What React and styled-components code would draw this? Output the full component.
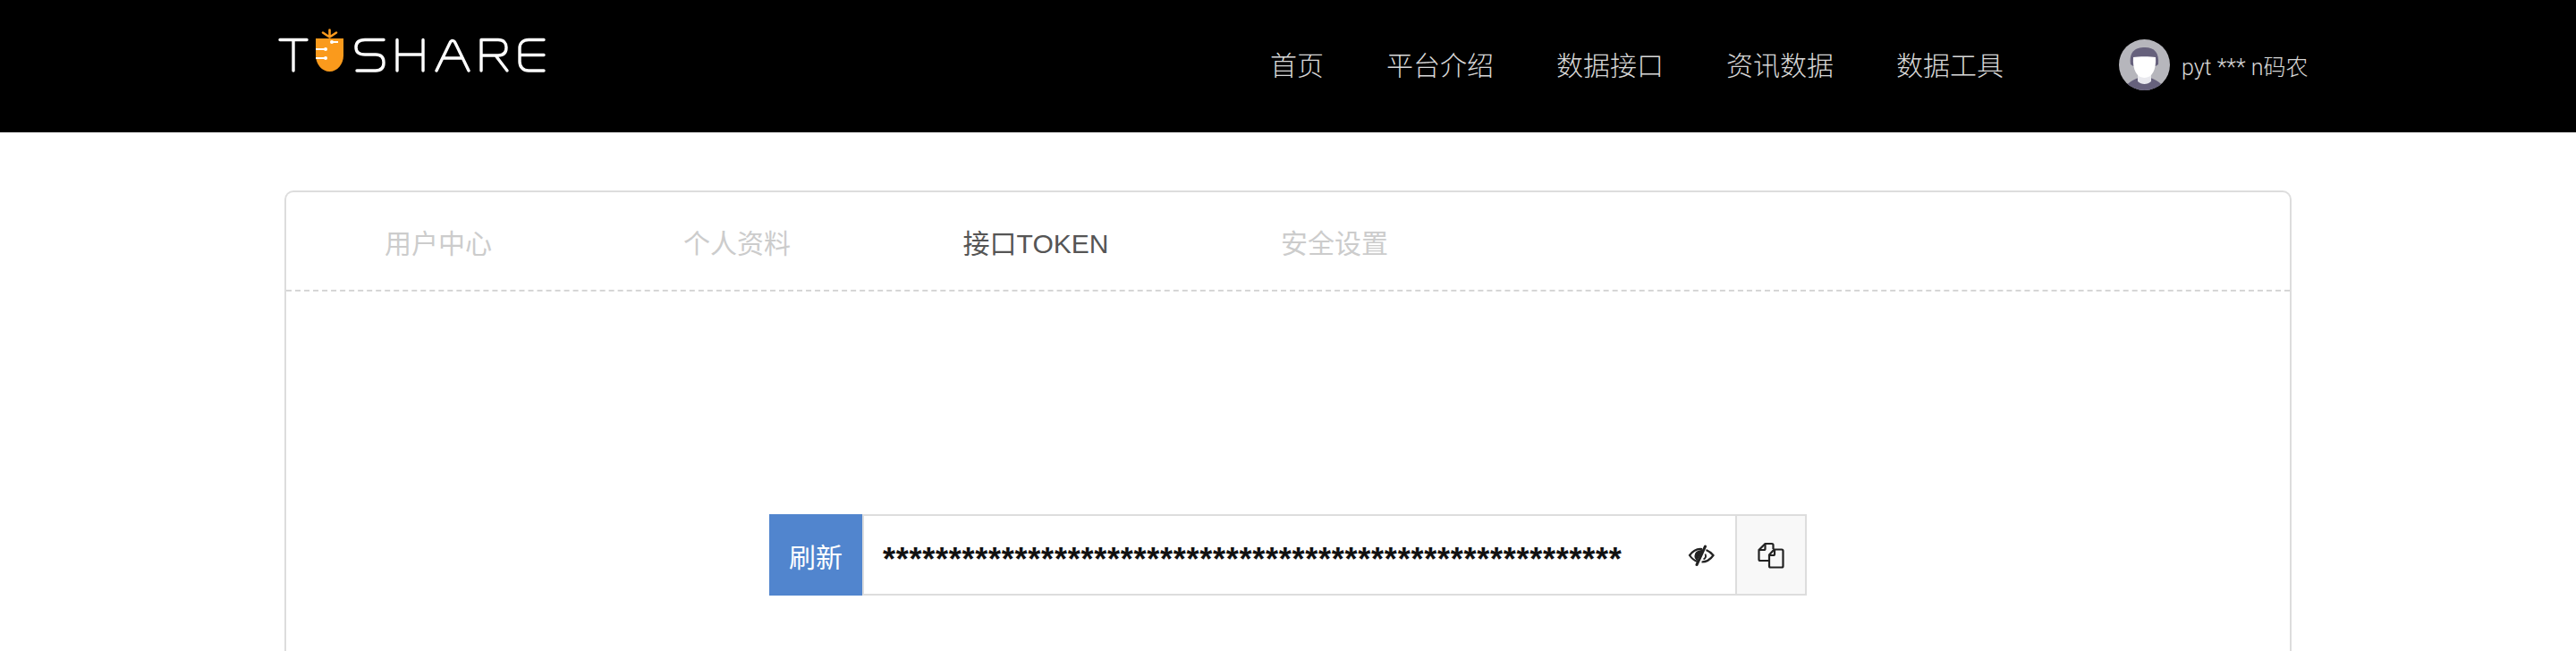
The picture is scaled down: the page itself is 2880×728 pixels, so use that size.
import React from 'react';
import styled, { createGlobalStyle } from 'styled-components';

const GlobalStyle = createGlobalStyle`
    html, body {
        margin: 0;
        padding: 0;
        background: #fff;
        overflow: hidden;
    }
    body {
        font-family: "Liberation Sans", "Noto Sans CJK SC", sans-serif;
    }
`;

const Header = styled.header`
    height: 148px;
    background: #000;
    display: flex;
    align-items: flex-start;
    padding: 0 299px 0 311px;
`;

const LogoWrap = styled.a`
    display: block;
    margin-top: 32px;
    width: 300px;
    height: 50px;
`;

const Nav = styled.nav`
    margin-left: auto;
    display: flex;
    gap: 70px;
    height: 141px;
    align-items: center;
`;

const NavItem = styled.a`
    font-family: "Noto Sans CJK SC", sans-serif;
    font-size: 30px;
    font-weight: 300;
    color: #d8d8d8;
    white-space: nowrap;
`;

const User = styled.div`
    width: 212px;
    margin-left: 129px;
    display: flex;
    align-items: center;
    gap: 13px;
    height: 145px;
    color: #d8d8d8;
    font-family: Roboto, "Noto Sans CJK SC", sans-serif;
    font-size: 25px;
    font-weight: 300;
    white-space: nowrap;
`;

const Card = styled.section`
    width: 2240px;
    height: 560px;
    margin: 65px 0 0 318px;
    border: 2px solid #ddd;
    border-bottom: 0;
    border-radius: 10px 10px 0 0;
`;

const Tabs = styled.div`
    display: grid;
    grid-template-columns: repeat(4, 334px);
    height: 109px;
    padding-left: 3px;
    border-bottom: 2px dashed #d6d6d6;
`;

const Tab = styled.a`
    display: flex;
    align-items: center;
    justify-content: center;
    font-size: 30px;
    color: ${({ $active }) => ($active ? '#555' : '#ccc')};
`;

const Body = styled.div`
    display: flex;
    padding: 249px 0 0 540px;
`;

const TokenGroup = styled.div`
    display: flex;
    width: 1160px;
    height: 91px;
`;

const RefreshButton = styled.button`
    width: 104px;
    border: 0;
    padding: 0;
    background: #5185ce;
    color: #fff;
    font-family: inherit;
    font-size: 30px;
`;

const TokenField = styled.div`
    flex: 1;
    display: flex;
    align-items: center;
    justify-content: space-between;
    padding: 0 23px 0 21px;
    border: 2px solid #ddd;
    font-size: 36px;
    font-weight: 700;
    color: #111;
`;

const Stars = styled.span`
    line-height: 1;
    letter-spacing: 0.750px;
    padding-top: 11px;
`;

const CopyButton = styled.button`
    width: 78px;
    padding: 0;
    border: 2px solid #ddd;
    border-left: 0;
    background: #f8f8f8;
    display: flex;
    align-items: center;
    justify-content: center;
`;

const Logo = () => (
    <svg width="300" height="50" viewBox="0 0 300 50" fill="none">
        <g stroke="#fff" strokeWidth="3.400" strokeLinecap="round" strokeLinejoin="round">
            <path d="M2 12.500H32M17 12.500V47" />
            <path d="M118 12.500H97C90 12.500 87 16 87 21C87 26 90 29 97 29H109C115 29 118 32 118 38C118 44 115 47 109 47H88" />
            <path d="M133 12.500V47M162 12.500V47M133 29H162" />
            <path d="M177 47L192 16C193.500 12.500 196.500 12.500 198 16L213 47M184 33H206" />
            <path d="M227 47V12.500H246C252 12.500 255 16 255 21C255 27 252 30 246 30H227M243 30L256 47" />
            <path d="M297 12.500H280C274 12.500 270 16 270 22V37C270 43 274 47 280 47H297M270 29.500H297" />
        </g>
        <path d="M42 11H73V30C73 40 66 48 57.500 48C49 48 42 40 42 30Z" fill="#fa9a1c" />
        <path d="M50 4.500L57.500 9.500L65 4.500M57.500 1.500V9.500" stroke="#fa9a1c" strokeWidth="2.600" strokeLinecap="round" />
        <path d="M42 23H53M42 33H53M60 15H67" stroke="#fff" strokeWidth="1.800" />
        <g fill="#fff">
            <circle cx="53" cy="23" r="2" />
            <circle cx="53" cy="33" r="2" />
            <circle cx="60" cy="15" r="2" />
        </g>
    </svg>
);

const Avatar = () => (
    <svg width="57" height="57" viewBox="0 0 57 57" style={{ flex: 'none' }}>
        <defs><clipPath id="avatar-clip"><circle cx="28.500" cy="28.500" r="28.500" /></clipPath></defs>
        <g clipPath="url(#avatar-clip)">
            <rect width="57" height="57" fill="#b6b6bc" />
            <path d="M6 57C8 48 17 45 22 43H35C40 45 49 48 51 57Z" fill="#66617c" />
            <path d="M21 36H36V47C32 51 25 51 21 47Z" fill="#e9e9ee" />
            <path d="M13 28C11 14 18 9 29 9C40 9 45 15 44 28L41 30H16Z" fill="#66617c" />
            <path d="M16 20C22 19 35 19 41 20C42 34 37 43 28.500 43C20 43 15 34 16 20Z" fill="#fff" />
        </g>
    </svg>
);

const EyeOff = () => (
    <svg width="30" height="24" viewBox="0 0 30 24" fill="none" stroke="#222" strokeWidth="2.200">
        <path d="M16 5C9.500 4 4.500 8.500 2 12C4 15 7 18 11 19" />
        <path d="M20.500 6C24 7.500 26.500 9.500 28.500 12C26 15.500 21 19.500 15.500 19.500" />
        <path d="M15 7C11 7.500 8.500 10 8.500 13C8.500 14.500 9 15.500 10 16.500Z" fill="#222" />
        <path d="M19.500 2L10 22.500" strokeWidth="3" strokeLinecap="round" />
        <path d="M19.500 10.500C20.500 13 19.500 15.500 17.500 16.500" strokeWidth="1.800" />
    </svg>
);

const CopyIcon = () => (
    <svg width="30" height="30" viewBox="0 0 30 30" fill="none" stroke="#222" strokeWidth="2.200" strokeLinejoin="round">
        <path d="M13 21H3C2 21 1.500 20.500 1.500 19.500V9L8.500 2H16C17 2 17.500 2.500 17.500 3.500V8" />
        <path d="M1.500 9H7C8 9 8.500 8.500 8.500 7.500V2" />
        <path d="M13 14.500L18.500 8.500H27C28 8.500 28.500 9 28.500 10V27C28.500 28 28 28.500 27 28.500H14.500C13.500 28.500 13 28 13 27Z" fill="#f8f8f8" />
        <path d="M13 15H17.500C18.500 15 19 14.500 19 13.500V8.500" />
    </svg>
);

const navItems = ['首页', '平台介绍', '数据接口', '资讯数据', '数据工具'];
const tabs = ['用户中心', '个人资料', '接口TOKEN', '安全设置'];

const App = () => (
    <>
        <GlobalStyle />
        <Header>
            <LogoWrap><Logo /></LogoWrap>
            <Nav>
                {navItems.map(item => <NavItem key={item}>{item}</NavItem>)}
            </Nav>
            <User>
                <Avatar />
                <span>pyt *** n码农</span>
            </User>
        </Header>
        <Card>
            <Tabs>
                {tabs.map(tab => <Tab key={tab} $active={tab === '接口TOKEN'}>{tab}</Tab>)}
            </Tabs>
            <Body>
                <TokenGroup>
                    <RefreshButton>刷新</RefreshButton>
                    <TokenField>
                        <Stars>{'*'.repeat(56)}</Stars>
                        <EyeOff />
                    </TokenField>
                    <CopyButton><CopyIcon /></CopyButton>
                </TokenGroup>
            </Body>
        </Card>
    </>
);

export default App;
